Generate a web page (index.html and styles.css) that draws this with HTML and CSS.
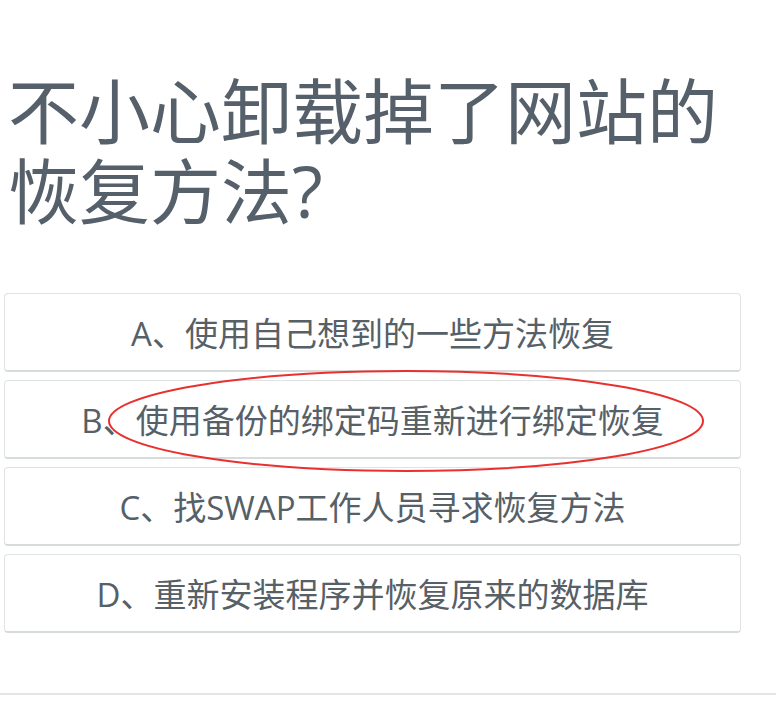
FILE: index.html
```html
<!DOCTYPE html>
<html lang="zh-CN">
<head>
<meta charset="utf-8">
<link rel="stylesheet" href="styles.css">
</head>
<body>
<div class="page">
  <h1 class="title"><span class="line">不小心卸载掉了网站的</span><span class="line">恢复方法?</span></h1>
  <div class="options">
    <div class="option">A、使用自己想到的一些方法恢复</div>
    <div class="option">B、使用备份的绑定码重新进行绑定恢复</div>
    <div class="option">C、找SWAP工作人员寻求恢复方法</div>
    <div class="option">D、重新安装程序并恢复原来的数据库</div>
  </div>
  <div class="divider"></div>
  <svg class="mark" width="776" height="719" viewBox="0 0 776 719">
    <ellipse cx="406" cy="421" rx="297" ry="50" fill="none" stroke="#e8312f" stroke-width="2"/>
  </svg>
</div>
</body>
</html>
```
FILE: styles.css
```css
html, body {
  margin: 0;
  padding: 0;
  background: #ffffff;
}
.page {
  position: relative;
  width: 776px;
  height: 719px;
  overflow: hidden;
  font-family: "Open Sans", "Noto Sans CJK SC", sans-serif;
  color: #5b6469;
}
.title {
  margin: 0;
  padding: 76px 0 0 8px;
  font-size: 71px;
  line-height: 80px;
  font-weight: 400;
  color: #56606a;
  display: flex;
  flex-direction: column;
}
.line {
  display: block;
  height: 80px;
  line-height: 70px;
}
.options {
  margin: 57px 0 0 4px;
  width: 737px;
  display: flex;
  flex-direction: column;
  gap: 8px;
}
.option {
  height: 76px;
  border: 1px solid #dfe3e4;
  border-bottom: 2px solid #d6dbdc;
  border-radius: 4px;
  display: flex;
  align-items: center;
  justify-content: center;
  font-size: 33px;
  color: #566067;
  background: #fff;
}
.divider {
  margin-top: 60px;
  height: 2px;
  background: #e3e6e7;
}
.mark {
  position: absolute;
  left: 0;
  top: 0;
  pointer-events: none;
}
```
